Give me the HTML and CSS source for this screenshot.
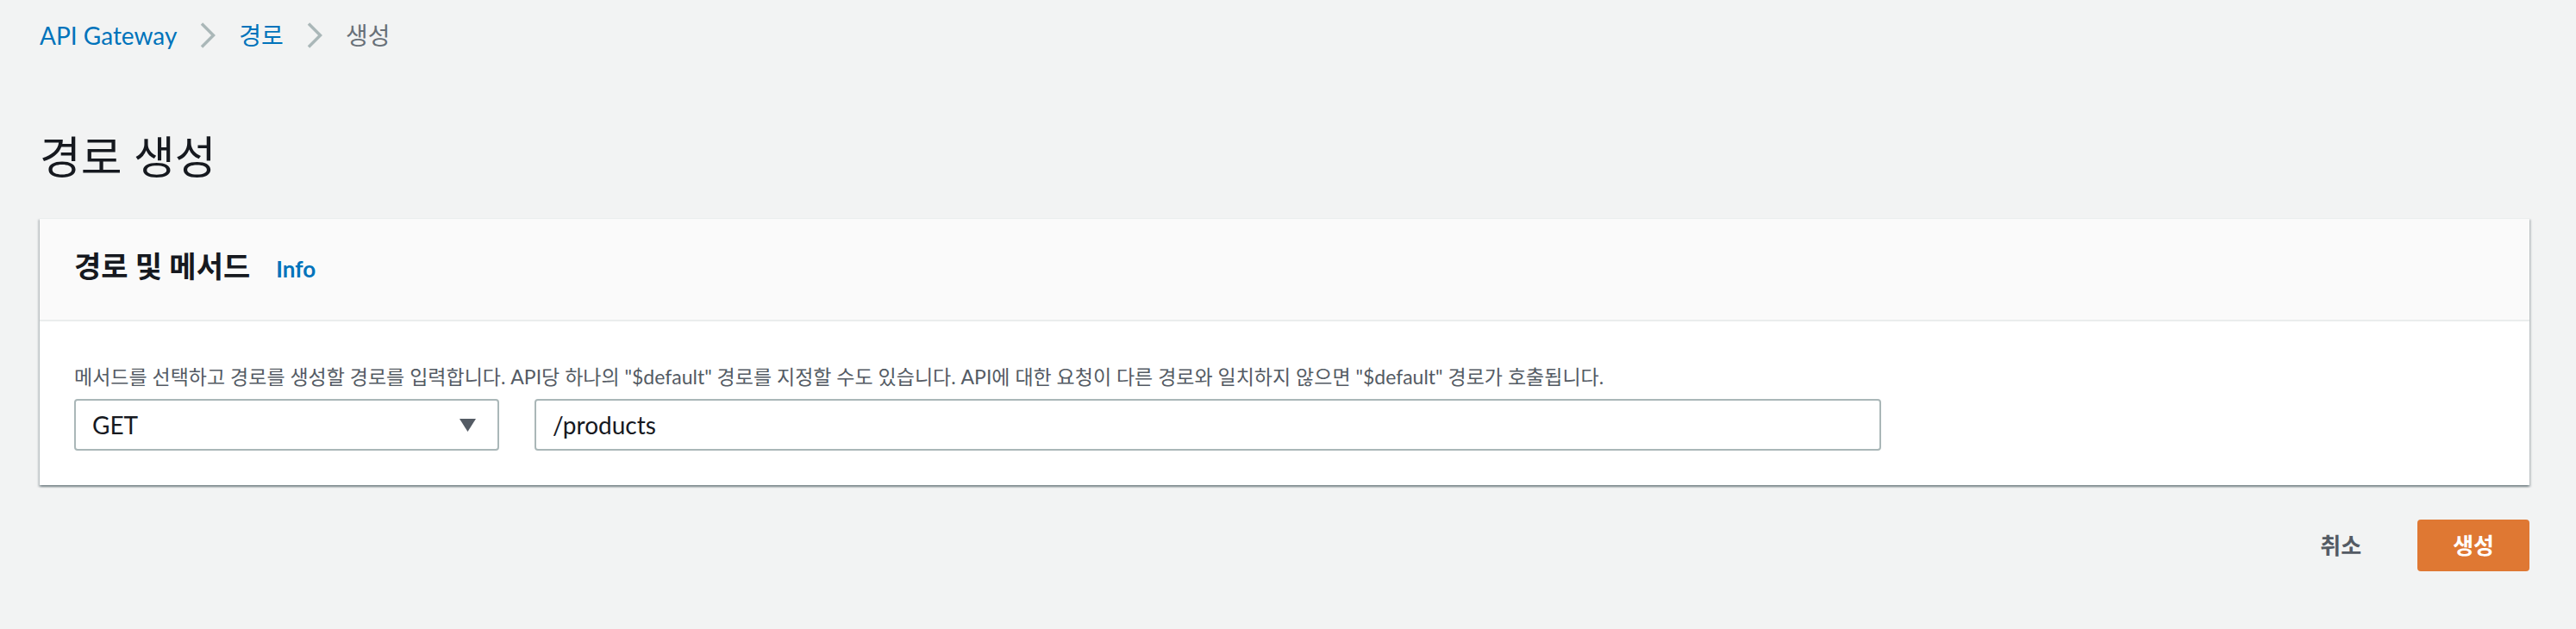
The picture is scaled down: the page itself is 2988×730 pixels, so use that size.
FILE: index.html
```html
<!DOCTYPE html>
<html lang="ko">
<head>
<meta charset="utf-8">
<title>경로 생성</title>
<link rel="stylesheet" href="styles.css">
</head>
<body>
<nav class="breadcrumbs">
  <a class="crumb-link" href="#">API Gateway</a>
  <svg class="chevron" viewBox="0 0 18 30" width="18" height="30"><path d="M2 1.5 L15.5 15 L2 28.5" /></svg>
  <a class="crumb-link" href="#">경로</a>
  <svg class="chevron" viewBox="0 0 18 30" width="18" height="30"><path d="M2 1.5 L15.5 15 L2 28.5" /></svg>
  <span class="crumb-current">생성</span>
</nav>

<h1 class="page-title">경로 생성</h1>

<section class="card">
  <header class="card-header">
    <div class="card-heading"><h2 class="card-title">경로 및 메서드</h2><a class="info-link" href="#">Info</a></div>
  </header>
  <div class="card-body">
    <p class="description">메서드를 선택하고 경로를 생성할 경로를 입력합니다. API당 하나의 "$default" 경로를 지정할 수도 있습니다. API에 대한 요청이 다른 경로와 일치하지 않으면 "$default" 경로가 호출됩니다.</p>
    <div class="field-row">
      <div class="select-box">
        <span class="field-text">GET</span>
        <svg class="caret" viewBox="0 0 19 15" width="19" height="15"><path d="M0 0 H19 L9.5 15 Z" /></svg>
      </div>
      <div class="text-input"><span class="field-text">/products</span></div>
    </div>
  </div>
</section>

<div class="actions">
  <button class="btn btn-cancel" type="button">취소</button>
  <button class="btn btn-primary" type="button">생성</button>
</div>
</body>
</html>
```

FILE: styles.css
```css
* { box-sizing: border-box; }

html, body {
  margin: 0;
  padding: 0;
}

body {
  background: #f2f3f3;
  font-family: Lato, "Noto Sans CJK KR", sans-serif;
  color: #16191f;
  padding: 0 54px 0 46px;
  width: 2988px;
  height: 730px;
  overflow: hidden;
}

.breadcrumbs {
  display: flex;
  align-items: center;
  gap: 27px;
  padding-top: 21px;
  height: 61px;
  font-size: 28px;
  line-height: 40px;
}

.crumb-link {
  color: #0073bb;
  text-decoration: none;
}

.crumb-current {
  color: #687078;
}

.chevron {
  display: block;
  fill: none;
  stroke: #aab7b8;
  stroke-width: 3.5;
}

.page-title {
  margin: 90px 0 0;
  font-size: 52px;
  line-height: 62px;
  font-weight: 400;
  color: #16191f;
}

.card {
  margin-top: 40px;
  background: #ffffff;
  box-shadow: 0 2px 2px 0 rgba(0, 28, 36, 0.3), 2px 2px 2px 0 rgba(0, 28, 36, 0.15), -2px 2px 2px 0 rgba(0, 28, 36, 0.15);
  border-top: 1px solid #eaeded;
}

.card-header {
  height: 119px;
  background: #fafafa;
  border-bottom: 2px solid #eaeded;
  padding: 0 40px;
  display: flex;
  align-items: center;
}

.card-heading {
  line-height: 42px;
}

.card-title {
  display: inline;
  margin: 0;
  font-size: 34px;
  font-weight: 700;
  color: #16191f;
}

.info-link {
  margin-left: 30px;
  font-size: 26px;
  font-weight: 700;
  color: #0073bb;
  text-decoration: none;
}

.card-body {
  padding: 48px 40px 40px;
}

.description {
  margin: 0 0 9px;
  font-size: 23px;
  line-height: 33px;
  color: #545b64;
}

.field-row {
  display: flex;
  gap: 41px;
}

.select-box,
.text-input {
  height: 60px;
  border: 2px solid #aab7b8;
  border-radius: 4px;
  background: #ffffff;
  display: flex;
  align-items: center;
  padding: 0 25px 0 19px;
}

.select-box {
  width: 493px;
  justify-content: space-between;
}

.text-input {
  width: 1562px;
}

.field-text {
  font-size: 28px;
  line-height: 40px;
  color: #16191f;
}

.caret {
  display: block;
  fill: #545b64;
}

.actions {
  margin-top: 40px;
  display: flex;
  justify-content: flex-end;
  gap: 24px;
}

.btn {
  height: 60px;
  border: none;
  border-radius: 4px;
  font-family: Lato, "Noto Sans CJK KR", sans-serif;
  font-size: 26px;
  font-weight: 700;
  line-height: 60px;
  padding: 0 41px;
  cursor: pointer;
}

.btn-cancel {
  background: transparent;
  color: #545b64;
}

.btn-primary {
  background: #df7833;
  color: #ffffff;
}
```
